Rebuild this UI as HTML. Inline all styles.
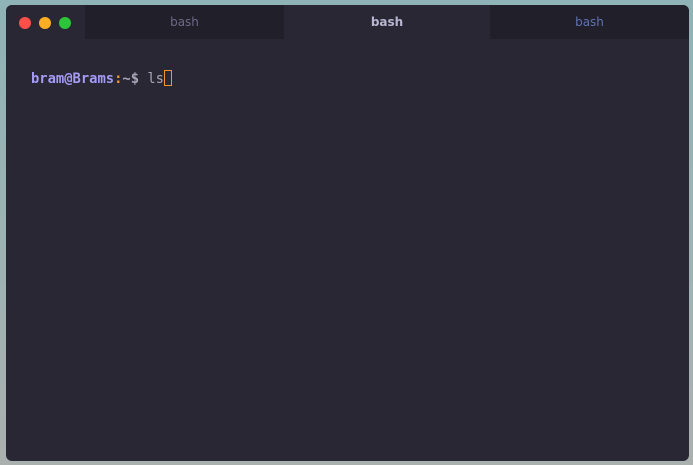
<!DOCTYPE html>
<html><head><style>
html,body{margin:0;padding:0;width:693px;height:465px;overflow:hidden;background:linear-gradient(#8fb3b6,#9fb2b2 60%,#aab0ae);font-family:"DejaVu Sans Mono","Liberation Mono",monospace;}
.win{position:absolute;left:6px;top:5px;width:683px;height:456px;background:#292734;border-radius:6px;overflow:hidden;}
.tab{position:absolute;top:0;height:34px;line-height:34px;text-align:center;font-size:12px;font-family:"DejaVu Sans","Liberation Sans",sans-serif;}
.dot{position:absolute;top:12px;width:12px;height:12px;border-radius:50%;}
.p{position:absolute;left:25px;top:65px;font-size:13.8px;font-weight:bold;color:#a59af5;white-space:pre;}
</style></head><body>
<div class="win">
<div class="tab" style="left:0;width:79px;background:#292734"></div>
<div class="dot" style="left:13px;background:#fe4f4a"></div>
<div class="dot" style="left:33px;background:#fdae25"></div>
<div class="dot" style="left:53px;background:#2cc63a"></div>
<div class="tab" style="left:79px;width:199px;background:#211f29;color:#6c6a86">bash</div>
<div class="tab" style="left:278px;width:206px;background:#292734;color:#b8b6d0;font-weight:bold">bash</div>
<div class="tab" style="left:484px;width:199px;background:#211f29;color:#5f71b3">bash</div>
<div class="p">bram@Brams<span style="color:#f0952f">:</span><span style="color:#a8a6b8">~$ </span><span style="color:#a8a6b8;font-weight:normal">ls</span><span style="display:inline-block;width:8px;height:16px;border:1px solid #f0952f;vertical-align:-3px;box-sizing:border-box"></span></div>
</div>
</body></html>
